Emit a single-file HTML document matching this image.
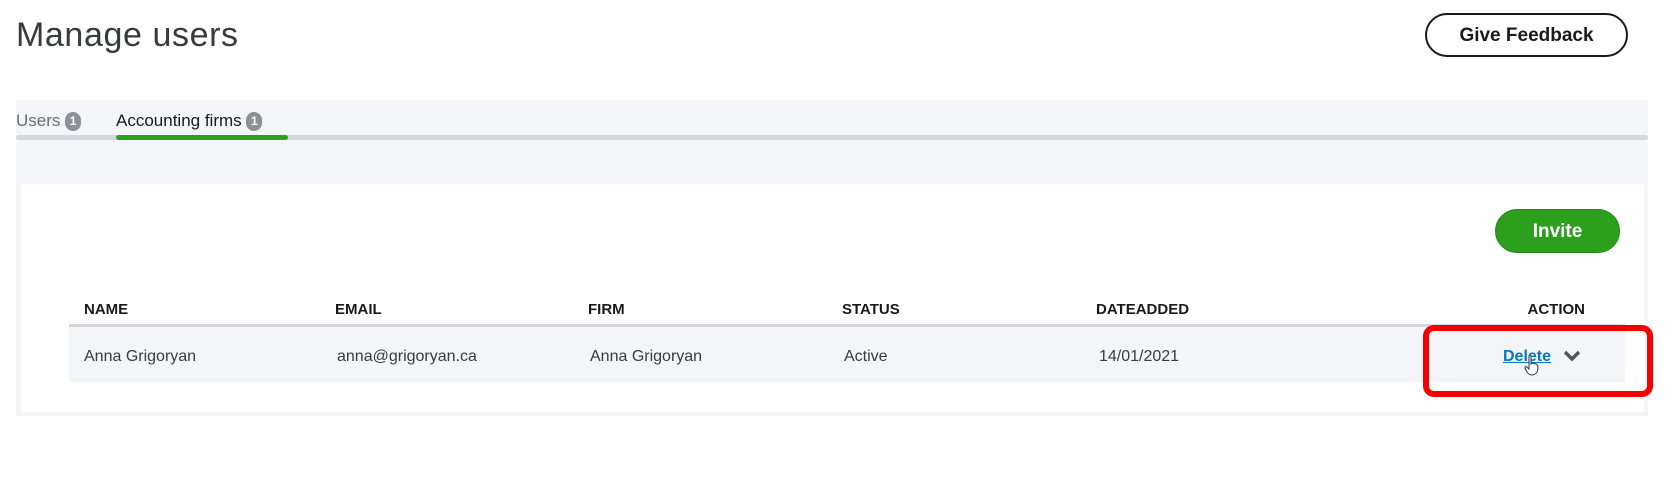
<!DOCTYPE html>
<html><head><meta charset="utf-8"><style>
*{margin:0;padding:0;box-sizing:border-box}
body{width:1665px;height:491px;background:#fff;font-family:"Liberation Sans",sans-serif;color:#393a3d;position:relative;overflow:hidden}
.a{position:absolute}
h1{position:absolute;left:16px;top:16px;font-size:34px;font-weight:normal;color:#393a3d;letter-spacing:0.6px}
.fb{left:1425px;top:13px;width:203px;height:44px;border:2px solid #1a1a1a;border-radius:22px;font-size:19px;font-weight:bold;color:#1a1a1a;text-align:center;line-height:41px}
.panel{left:16px;top:100px;width:1632px;height:316px;background:#f4f5f8}
.tab{top:111px;font-size:17px}
.badge{display:inline-block;width:16px;height:19px;border-radius:8px;background:#8d9096;color:#fff;font-size:12px;font-weight:bold;text-align:center;line-height:19px;vertical-align:1px}
.card{left:21px;top:184px;width:1623px;height:228px;background:#fff}
.inv{left:1495px;top:209px;width:125px;height:44px;border-radius:22px;background:#2ca01c;border:1px solid #22881a;color:#fff;font-size:19px;font-weight:bold;text-align:center;line-height:44px}
.th{top:301px;font-size:15px;font-weight:bold;color:#1a1a1a}
.td{top:348px;font-size:16px;color:#393a3d}
</style></head><body>
<h1>Manage users</h1>
<div class="a fb">Give Feedback</div>
<div class="a panel"></div>
<div class="a" style="left:16px;top:135px;width:1632px;height:5px;background:#d4d7dc;border-radius:3px"></div>
<div class="a" style="left:116px;top:135px;width:172px;height:5px;background:#2ca01c;border-radius:3px"></div>
<div class="a tab" style="left:16px;color:#6b6c72">Users <span class="badge">1</span></div>
<div class="a tab" style="left:116px;color:#1a1a1a">Accounting firms <span class="badge">1</span></div>
<div class="a card"></div>
<div class="a inv">Invite</div>
<div class="a th" style="left:84px">NAME</div>
<div class="a th" style="left:335px">EMAIL</div>
<div class="a th" style="left:588px">FIRM</div>
<div class="a th" style="left:842px">STATUS</div>
<div class="a th" style="left:1096px">DATEADDED</div>
<div class="a th" style="left:1517px;width:68px;text-align:right">ACTION</div>
<div class="a" style="left:69px;top:324px;width:1556px;height:3px;background:#d4d7dc"></div>
<div class="a" style="left:69px;top:327px;width:1556px;height:55px;background:#f4f5f8"></div>
<div class="a td" style="left:84px">Anna Grigoryan</div>
<div class="a td" style="left:337px">anna@grigoryan.ca</div>
<div class="a td" style="left:590px">Anna Grigoryan</div>
<div class="a td" style="left:844px">Active</div>
<div class="a td" style="left:1099px">14/01/2021</div>
<div class="a td" style="left:1503px;color:#0077c5;font-weight:bold;text-decoration:underline">Delete</div>
<svg class="a" style="left:1562px;top:349px" width="20" height="14" viewBox="0 0 20 14"><path d="M3 3 L10 10 L17 3" stroke="#555" stroke-width="3.5" fill="none"/></svg>
<svg class="a" style="left:1524px;top:354px" width="16" height="22" viewBox="0 0 16 22"><path d="M5 2 Q6 0 7 2 L7 10 L8 9 L12 10 Q14 11 14 14 L13 18 Q11 21 8 21 Q5 21 3 18 L1 14 Q1 12 3 13 L5 15 Z" fill="#fff" stroke="#333" stroke-width="1"/></svg>
<div class="a" style="left:1423px;top:325px;width:230px;height:72px;border:6px solid #f40000;border-radius:11px"></div>
</body></html>
